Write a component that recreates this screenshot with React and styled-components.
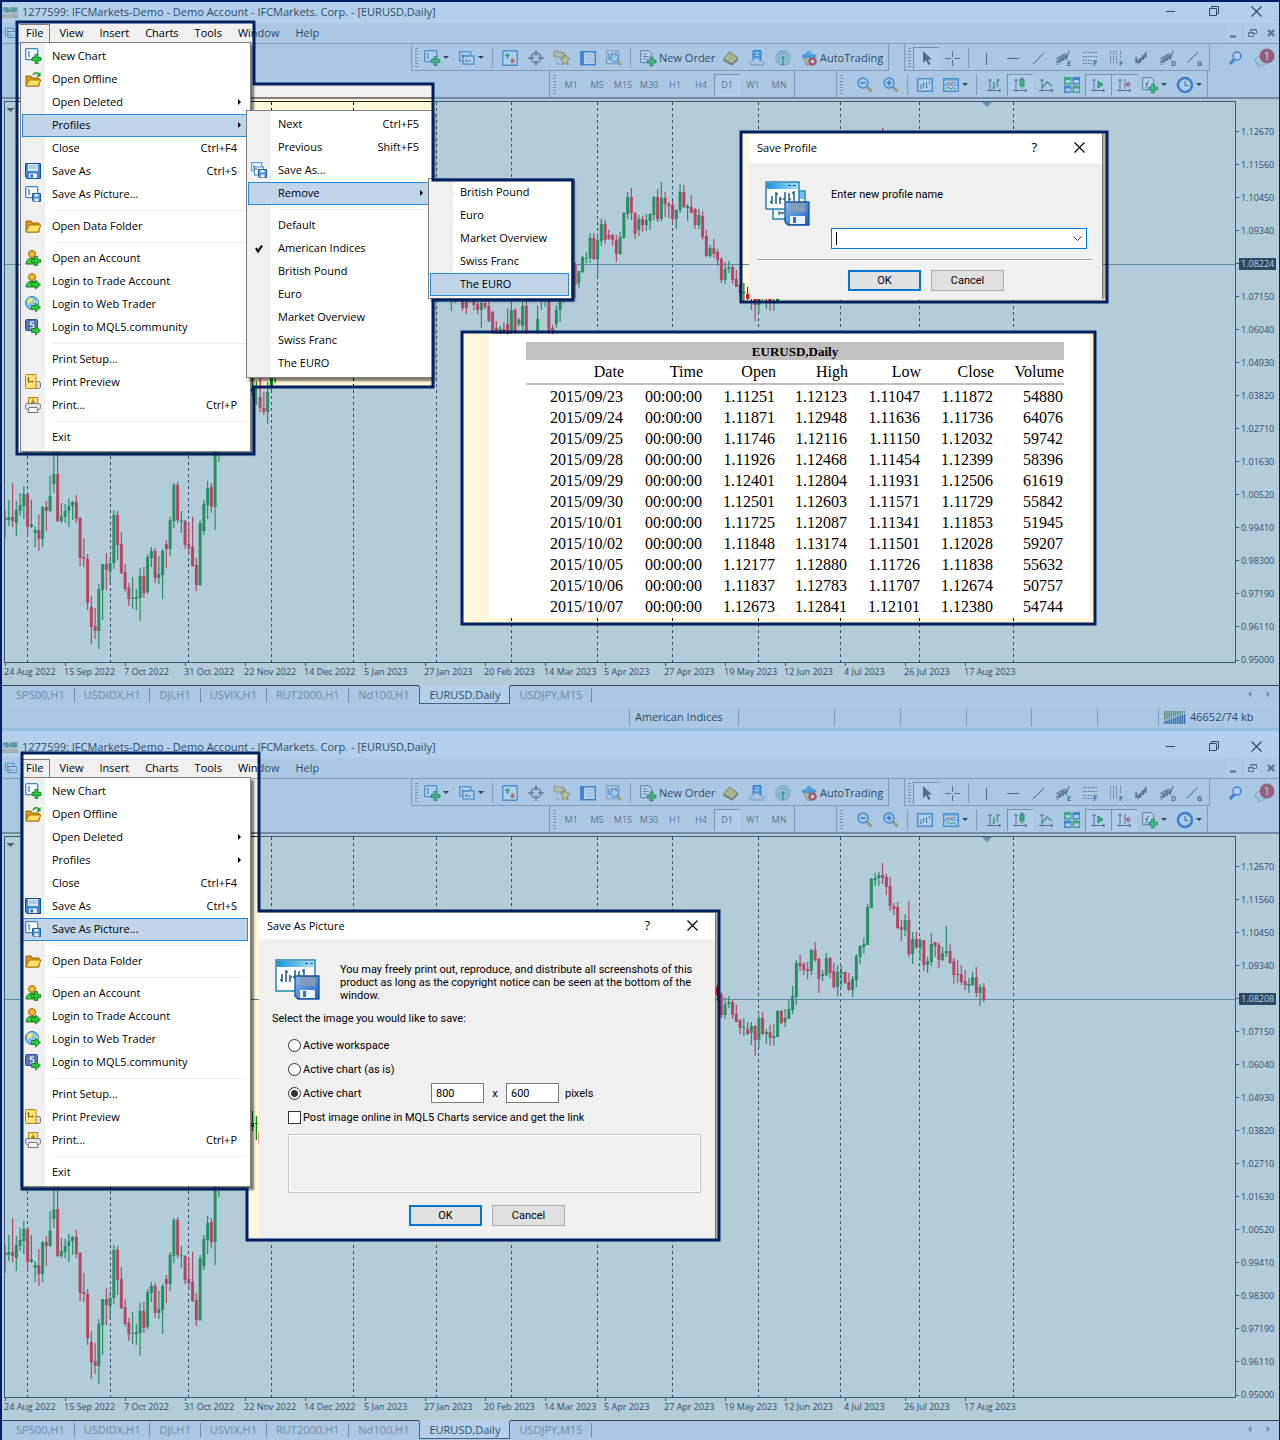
import React from 'react';
import styled, { createGlobalStyle, css } from 'styled-components';

const GlobalStyle = createGlobalStyle`
	* {
		box-sizing: border-box;
	}

	body {
		margin: 0;
		font-family: "Open Sans", "Noto Sans", sans-serif;
		font-size: 11px;
		line-height: 16px;
		color: #000;
	}

	button, input {
		font: inherit;
		color: inherit;
		margin: 0;
		padding: 0;
		border: 0;
		background: none;
		border-radius: 0;
	}

	svg {
		display: block;
		flex-shrink: 0;
	}
`

const NAVY = '#002060';

const Page = styled.div`
	position: relative;
	overflow: hidden;
	background: #f0f0f0;

	&::after {
		content: "";
		position: absolute;
		inset: 0;
		z-index: 7;
		border: solid ${NAVY};
		border-width: 2px 1px 0 2px;
		pointer-events: none;
	}
`

const TitleBar = styled.header`
	display: flex;
	align-items: center;
	gap: 4px;
	height: ${({ $tall }) => ($tall ? '27px' : '23px')};
	padding: ${({ $tall }) => ($tall ? '4px' : '0')} 8px 0 2px;
	background: #fff;

	& > h1 {
		flex: 1;
		margin: 0;
		font-size: 11px;
		font-weight: normal;
		white-space: nowrap;
	}
`

const WindowButtons = styled.div`
	display: flex;
	gap: 11px;
	padding-bottom: 2px;

	& > button {
		display: flex;
		justify-content: center;
		width: 32px;
	}
`

const MenuBar = styled.nav`
	position: relative;
	z-index: 2;
	display: flex;
	align-items: center;
	gap: 3px;
	height: 21px;
	padding-left: 5px;
	border-bottom: 1px solid #a0a0a0;
	background: #f0f0f0;
`

const MenuSlot = styled.div`
	position: relative;
`

const MenuTitle = styled.button`
	height: 19px;
	padding: 0 6px 1px;
	border: solid ${({ $open }) => ($open ? '#808080' : 'transparent')};
	border-width: 1px 1px 0 0;
`

const ChildButtons = styled.div`
	display: flex;
	gap: 3px;
	margin-left: auto;
	padding-right: 1px;

	& > button {
		display: flex;
		align-items: center;
		justify-content: center;
		width: 16px;
		height: 18px;
		background: #f6f6f6;
	}
`

const Popup = styled.ul`
	position: absolute;
	left: ${({ $nested }) => ($nested ? 'calc(100% - 1px)' : '0')};
	top: ${({ $nested }) => ($nested ? '-5px' : '18px')};
	z-index: 3;
	width: ${({ $width }) => $width}px;
	margin: 0;
	padding: 2px 1px;
	list-style: none;
	border: 1px solid #808080;
	background: linear-gradient(to right, #f0f0f0 24px, #fff 24px);
	box-shadow: 3px 3px 2px rgba(0, 0, 0, 0.5);
`

const PopupRow = styled.li`
	position: relative;
	height: 23px;
	margin-right: 1px;
	border: 1px solid ${({ $active }) => ($active ? '#2a8ad4' : 'transparent')};
	background: ${({ $active }) => ($active ? '#c0d5e7' : 'transparent')};

	& > button {
		display: flex;
		align-items: center;
		width: 100%;
		height: 21px;
		text-align: left;
		white-space: nowrap;
	}
`

const PopupIcon = styled.span`
	display: flex;
	justify-content: center;
	width: 20px;
	margin-right: 9px;
`

const Shortcut = styled.span`
	margin-left: auto;
	padding-right: 10px;
`

const Arrow = styled.span`
	margin-left: auto;
	margin-right: 6px;
	border: solid transparent;
	border-width: 3px 0 3px 3px;
	border-left-color: #000;
`

const PopupLine = styled.li`
	height: 9px;
	padding: 4px 2px 0 30px;

	&::before {
		content: "";
		display: block;
		height: 1px;
		background: #f0f0f0;
	}
`

const ToolRow = styled.div`
	display: flex;
	height: ${({ $height }) => $height}px;
	padding-left: ${({ $indent }) => $indent}px;
	background: #f0f0f0;
`

const ToolGroup = styled.div`
	display: flex;
	align-items: center;
	border: solid #a0a0a0;
	border-width: 0 1px ${({ $underline }) => ($underline ? '1px' : '0')} 1px;
	margin-right: ${({ $after }) => $after || 0}px;
	padding: 1px ${({ $end }) => $end || 0}px 0 3px;
`

const Grip = styled.span`
	width: 3px;
	height: 20px;
	margin-right: ${({ $after }) => $after || 1}px;
	background: repeating-linear-gradient(#909090 0 1px, transparent 1px 3px);
`

const ToolButton = styled.button`
	display: flex;
	align-items: center;
	justify-content: ${({ $wide }) => ($wide ? 'flex-start' : 'center')};
	gap: 3px;
	width: ${({ $wide }) => $wide || 26}px;
	height: 22px;
	padding-left: ${({ $wide }) => ($wide ? '5px' : '0')};
	white-space: nowrap;

	${({ $pressed }) => $pressed && css`
		background: #f7f7f7;
		box-shadow: inset 1px 1px #909090, inset -1px -1px #fff;
	`}
`

const Period = styled(ToolButton)`
	font-size: 9px;
	color: #555;
`

const Divider = styled.span`
	width: 1px;
	height: 20px;
	margin: 0 4px 0 3px;
	background: #a0a0a0;
`

const Caret = styled.span`
	border: solid transparent;
	border-width: 3px 3px 0;
	border-top-color: #000;
`

const Corner = styled.div`
	display: flex;
	align-items: center;
	gap: 10px;
	margin-left: auto;
	padding-right: 5px;
`

const ChartFrame = styled.section`
	padding: 2px 0 0 4px;
	border-top: 2px solid #808080;
	border-bottom: 1px solid #000;
	background: #fff8dc;
`

const ChartRow = styled.div`
	display: flex;
`

const Plot = styled.div`
	flex: 1;
	min-width: 0;
	height: 562px;
	border: 1px solid #222;

	& > svg {
		width: 100%;
		height: 100%;
	}
`

const PriceAxis = styled.ol`
	width: 44px;
	height: 562px;
	margin: 0;
	padding: 14px 0 0;
	list-style: none;
	font-size: 9px;
	line-height: 12px;

	& > li {
		display: flex;
		align-items: center;
		height: 33px;
	}

	& > li:last-child {
		height: 34px;
	}

	& > li::before {
		content: "";
		width: 3px;
		height: 1px;
		background: #222;
	}
`

const Price = styled.span`
	padding: 0 2px;
	${({ $current }) => $current && css`
		background: #000;
		color: #fff;
	`}
`

const TimeAxis = styled.ol`
	display: flex;
	height: 22px;
	margin: 0;
	padding: 0;
	list-style: none;
	overflow: hidden;
	font-size: 9px;
	line-height: 12px;

	& > li {
		flex-shrink: 0;
		width: 60px;
		white-space: nowrap;
	}

	& > li::before {
		content: "";
		display: block;
		width: 1px;
		height: 3px;
		margin-left: 1px;
		background: #222;
	}
`

const Tabs = styled.div`
	display: flex;
	align-items: flex-start;
	height: 19px;
	padding: 0 7px;
	background: #f0f0f0;
`

const Tab = styled.button`
	display: flex;
	align-items: center;
	height: 17px;
	color: ${({ $active }) => ($active ? '#000' : '#808080')};

	& > span {
		padding: 0 9px;
		line-height: 14px;
		border-right: 1px solid ${({ $plain }) => ($plain ? 'transparent' : '#808080')};
	}

	${({ $active }) => $active && css`
		background: #fff;
		border: solid #333;
		border-width: 0 1px 1px;
		height: 18px;
		box-shadow: 0 -1px #fff;

		& > span {
			border: 0;
		}
	`}
`

const TabScroll = styled.div`
	display: flex;
	gap: 8px;
	margin: 3px 0 0 auto;
`

const StatusBar = styled.footer`
	display: flex;
	align-items: center;
	height: 26px;
	border-top: 1px solid #fafafa;
	border-bottom: 3px solid #c8dfe8;
	background: #f0f0f0;
`

const StatusCell = styled.div`
	display: flex;
	align-items: center;
	gap: 4px;
	flex: ${({ $width }) => ($width ? `0 0 ${$width}px` : '1')};
	height: 18px;
	padding-left: 5px;
	border-left: 1px solid ${({ $width }) => ($width ? '#a0a0a0' : 'transparent')};
	white-space: nowrap;
`

const Tint = styled.div`
	position: absolute;
	inset: 0;
	z-index: 5;
	background: rgba(91, 155, 213, 0.47);
	pointer-events: none;
`

const Outlines = styled.svg`
	position: absolute;
	inset: 0;
	z-index: 6;
	width: 100%;
	height: 100%;
	pointer-events: none;
	fill: none;
	stroke: ${NAVY};
	stroke-width: 3;
`

const Floating = styled.div`
	position: absolute;
	z-index: 4;
	left: ${({ $x }) => $x}px;
	top: ${({ $y }) => $y}px;
	width: ${({ $width }) => $width}px;
`

const Dialog = styled(Floating).attrs({ as: 'form' })`
	background: #f0f0f0;
	border-right: 1px solid #777;
	box-shadow: 3px 0 2px rgba(0, 0, 0, 0.3);
	font-family: Roboto, "Open Sans", sans-serif;
	font-size: 11px;
	line-height: 13px;
`

const DialogTitle = styled.div`
	display: flex;
	align-items: center;
	height: ${({ $height }) => $height}px;
	padding: 0 15px 2px 8px;
	background: #fff;
	font-family: "Open Sans", "Noto Sans", sans-serif;

	& > h2 {
		flex: 1;
		margin: 0;
		font-size: 11px;
		font-weight: normal;
	}

	& > button {
		margin-left: 34px;
		font-size: 13px;
	}
`

const ProfileBody = styled.div`
	padding: 18px 15px 8px 8px;
`

const ProfileFields = styled.div`
	display: grid;
	grid-template-columns: 66px 1fr;
	padding: 0 0 10px 8px;

	& > label {
		padding-top: 7px;
	}
`

const Combo = styled.div`
	grid-column: 2;
	display: flex;
	align-items: center;
	height: 21px;
	margin-top: 1px;
	padding: 0 4px;
	border: 1px solid #0078d7;
	background: #fff;

	&::before {
		content: "";
		width: 1px;
		height: 13px;
		background: #000;
	}

	& > input {
		flex: 1;
		min-width: 0;
		height: 17px;
		outline: 0;
	}
`

const Rule = styled.hr`
	height: 2px;
	margin: 0 -5px 9px 0;
	border: solid #fff;
	border-width: 0 0 1px;
	background: #a0a0a0;
`

const Buttons = styled.div`
	display: flex;
	gap: 10px;
	padding-left: ${({ $indent }) => $indent}px;
`

const PushButton = styled.button`
	width: 73px;
	height: 21px;
	border: ${({ $primary }) => ($primary ? '2px solid #0078d7' : '1px solid #adadad')};
	background: #e1e1e1;
`

const PictureBody = styled.div`
	padding: 20px 14px 13px 13px;
`

const Notice = styled.div`
	display: flex;
	gap: 19px;
	height: 53px;
	padding-left: 3px;

	& > p {
		margin: 4px 0 0;
	}
`

const Options = styled.fieldset`
	margin: 0;
	padding: 0;
	border: 0;

	& > legend {
		padding: 0;
		margin-bottom: 8px;
	}
`

const OptionRow = styled.div`
	display: flex;
	align-items: center;
	height: 24px;
	padding-left: 16px;

	& > label {
		width: ${({ $fixed }) => ($fixed ? '130px' : 'auto')};
		padding-left: 2px;
	}
`

const Mark = styled.input`
	appearance: none;
	width: 13px;
	height: 13px;
	border: 1px solid #333;
	border-radius: ${({ type }) => (type === 'radio' ? '50%' : '0')};
	background: #fff;

	&:checked {
		background: radial-gradient(#333 0 3px, #fff 4px);
	}
`

const SizeInput = styled.input`
	width: 53px;
	height: 20px;
	padding: 0 4px;
	border: 1px solid #7a7a7a;
	background: #fff;
`

const Unit = styled.span`
	padding: 0 6px;
	min-width: 22px;
	text-align: center;
`

const LinkBox = styled.output`
	display: block;
	height: 59px;
	margin: 5px 0 12px 16px;
	border: 1px solid #c8c8c8;
	box-shadow: inset 0 0 0 1px #fff;
`

const Sheet = styled(Floating)`
	padding: 8px 26px 1px 37px;
	background: #fff;
	font-family: "Liberation Serif", "Times New Roman", serif;
	font-size: 16px;
	line-height: 21px;
`

const Quotes = styled.table`
	width: 100%;
	table-layout: fixed;
	border-collapse: collapse;
	text-align: right;

	& > caption {
		height: 18px;
		background: #c0c0c0;
		font-size: 13px;
		line-height: 19px;
		font-weight: bold;
	}

	& th {
		height: 24px;
		padding: 0;
		font-weight: normal;
		border-bottom: 2px solid #c0c0c0;
	}

	& td {
		height: 21px;
		padding: 0 1px 0 0;
	}

	& tbody tr:first-child td {
		height: 22px;
		padding-top: 1px;
	}
`

const plus = (x, y) => (
	<path d={`M${x} ${y}h3v3h3v3h-3v3h-3v-3h-3v-3h3z`} fill="#2fc23c" stroke="#0b7f16" strokeWidth=".8" />
);
const goArrow = <path d="M6.500 9.500h4V7l5 4.500-5 4.500v-2.500h-4z" fill="#2fc23c" stroke="#0b7f16" strokeWidth=".8" />;
const miniDisk = (
	<g>
		<path d="M7.500 7.500h8v8h-7l-1-1z" fill="#4b8fd8" stroke="#1f5d9e" />
		<path d="M9.500 8h4v2.500h-4zM9.500 12.500h4v3h-4z" fill="#e8f1fa" />
	</g>
);
const sheet = (
	<g>
		<rect x=".7" y=".7" width="12" height="11" rx="1" fill="#f7fbff" stroke="#3d87c8" strokeWidth="1.300" />
		<path d="M4 3v6M3 4.500h1M4 8h1M8 9h2" fill="none" stroke="#446a8c" />
	</g>
);
const person = (
	<g>
		<path d="M1 14c0-8 12-8 12 0z" fill="#43c93f" stroke="#138018" />
		<circle cx="7" cy="4" r="3.500" fill="#f0b53a" stroke="#a8690c" />
	</g>
);
const lens = (
	<g>
		<path d="M9.500 9.500l5 5" stroke="#c9a13a" strokeWidth="3" />
		<circle cx="6" cy="6" r="5" fill="#dff1fb" stroke="#3580c4" strokeWidth="1.500" />
	</g>
);
const axes = <path d="M4 2v12.500M1 13.500h13M2.500 4L4 2l1.500 2M13 12l2 1.500-2 1.500" fill="none" stroke="#555" />;
const zigzag = <path d="M1 15l3-7v5l3-8v6l3-7v6l3-9M0 12l12-6M0 9l9-5" fill="none" stroke="#555" strokeWidth="1.100" />;
const letter = (c) => <text x="11" y="16" fontSize="7" fontWeight="bold" fill="#444">{c}</text>;

const drawings = {
	newChart: <>{sheet}{plus(10, 6.500)}</>,
	openOffline: (
		<>
			<path d="M1 15V5h5l1 2h7v8z" fill="#d99a1c" stroke="#9c6a08" />
			<path d="M1 15l3-6h12l-3 6z" fill="#ffe06a" stroke="#a9780d" />
			<path d="M8 4q3-4 6-1" fill="none" stroke="#1b9b28" strokeWidth="1.500" />
			<path d="M15.500 1v4.500H11z" fill="#1b9b28" />
		</>
	),
	folder: (
		<>
			<path d="M1 14V3h5l1 2h7v9z" fill="#d99a1c" stroke="#9c6a08" />
			<path d="M1 14l3-7h12l-3 7z" fill="#ffe06a" stroke="#a9780d" />
		</>
	),
	disk: (
		<>
			<path d="M.5.5h15v15H2L.5 14z" fill="#3d87d0" stroke="#1d4f8e" />
			<path d="M3 1h10v7H3z" fill="#d7e6f5" />
			<path d="M4 3h8M4 5h8" stroke="#8fb3d6" />
			<path d="M4 10.500h8V15H4z" fill="#e8f1fa" />
			<path d="M5.500 11.500H8v3H5.500z" fill="#2b66a8" />
		</>
	),
	picture: <>{sheet}{miniDisk}</>,
	profiles: (
		<>
			<rect x=".7" y=".7" width="10" height="8" fill="#f7fbff" stroke="#3d87c8" />
			<rect x="3.500" y="5" width="9" height="8" fill="#f7fbff" stroke="#3d87c8" />
			<path d="M3 3v4h4" fill="none" stroke="#446a8c" />
			{miniDisk}
		</>
	),
	openAccount: <>{person}{plus(9.500, 6.500)}</>,
	login: <>{person}{goArrow}</>,
	web: (
		<>
			<circle cx="7" cy="7" r="6.500" fill="#7fc4ee" stroke="#2c78b4" />
			<path d="M3 3q4-3 5 1l-3 4-3-1zM9 6l4-1-1 5z" fill="#f2e37c" />
			{goArrow}
		</>
	),
	mql: (
		<>
			<rect x=".5" y=".5" width="12" height="11" rx="1" fill="#5677b5" stroke="#33508c" />
			<path d="M9 3H5.500v2.500Q9 5 9 7.200T5 9" fill="none" stroke="#fff" strokeWidth="1.200" />
			{goArrow}
		</>
	),
	preview: (
		<>
			<rect x="7" y="7.500" width="8.500" height="7" rx="2" fill="#ddd" stroke="#777" />
			<rect x=".5" y=".5" width="10.500" height="14" rx="1" fill="#ffe275" stroke="#b5871b" />
			<path d="M3.500 3v6M2.500 5h2M3.500 7.500h5M7.500 6.500v2" fill="none" stroke="#8a6a1a" />
		</>
	),
	print: (
		<>
			<rect x="3.500" y=".5" width="9" height="8" fill="#ffe275" stroke="#b5871b" />
			<path d="M8 2v4M6 5h4" stroke="#8a6a1a" />
			<rect x=".5" y="6.500" width="15" height="6" rx="2" fill="#e4e4e4" stroke="#777" />
			<path d="M4 10.500h8l1 5H3z" fill="#fafafa" stroke="#777" />
		</>
	),
	check: <path d="M5 8l2 3.500L11 5.500" fill="none" stroke="#000" strokeWidth="2" />,
	windows: (
		<>
			<rect x=".7" y="1.700" width="11" height="9" fill="#f7fbff" stroke="#3d87c8" strokeWidth="1.300" />
			<rect x="4" y="6" width="11" height="8" fill="#f7fbff" stroke="#3d87c8" strokeWidth="1.300" />
			<path d="M3.500 4v4M3 6h7M7 9v3M6 11h6" fill="none" stroke="#446a8c" />
		</>
	),
	market: (
		<>
			<rect x=".7" y=".7" width="14.600" height="14.600" rx="1" fill="#f7fbff" stroke="#3d87c8" strokeWidth="1.400" />
			<path d="M5.500 3l3 3h-2v2.500h-2V6h-2z" fill="#1fa52c" />
			<path d="M10.500 13.500l3-3h-2V8h-2v2.500h-2z" fill="#e04434" />
		</>
	),
	target: (
		<>
			<circle cx="8" cy="8" r="5" fill="none" stroke="#666" strokeWidth="1.300" />
			<path d="M8 0v6M8 10v6M0 8h6M10 8h6" stroke="#666" strokeWidth="1.300" />
		</>
	),
	favourites: (
		<>
			<path d="M0 7V1h4l1 1.500h5V7z" fill="#f3dc8c" stroke="#b18d2c" />
			<path d="M11 4.500l1.600 3.300 3.400.6-2.500 2.600.6 3.700L11 13l-3.100 1.700.6-3.700L6 8.400l3.400-.6z" fill="#ffe15a" stroke="#a8842a" />
			<path d="M3 9v6M3 14h3" stroke="#888" strokeDasharray="1 1" />
		</>
	),
	terminal: (
		<>
			<rect x=".7" y="1.700" width="14.600" height="13" fill="#fff" stroke="#2b72c0" strokeWidth="1.400" />
			<path d="M1 2h3v12H1z" fill="#2b72c0" />
			<path d="M6 5h8M6 8h8M6 11h8" stroke="#c3cfdb" />
		</>
	),
	tester: (
		<>
			<rect x=".7" y=".7" width="12" height="13" fill="#f4f6f8" stroke="#7d97b0" />
			<path d="M3 3v7M6 2v6M10 2v4" stroke="#667" />
			<path d="M11 11l4 4" stroke="#c9a13a" strokeWidth="2.500" />
			<circle cx="8.500" cy="8" r="4" fill="#cfe6f7" fillOpacity=".8" stroke="#3580c4" />
		</>
	),
	order: (
		<>
			<path d="M.7.7h8l3 3v9H.7z" fill="#fff" stroke="#666" />
			<path d="M3 4h4M3 6.500h6M3 9h4" stroke="#777" />
			{plus(10, 7)}
		</>
	),
	book: (
		<>
			<path d="M.5 9l6-7 8.500 6-6 6z" fill="#f3c95a" stroke="#8a6414" />
			<path d="M.5 9L9 14l6-6v2l-6 5.500L.5 11z" fill="#8f6a24" />
		</>
	),
	host: (
		<>
			<path d="M4 .5h8v9H4z" fill="#3a9be6" stroke="#1d6eb6" />
			<path d="M6 3h4M6 5.500h4" stroke="#fff" />
			<path d="M3 15c-4-.5-2-5 .5-4 1-4 7-4 7.500 0 5-.5 5 4 2 4z" fill="#e7edf5" stroke="#8093aa" />
		</>
	),
	signal: (
		<>
			<circle cx="8" cy="8" r="7" fill="none" stroke="#8fa9bd" strokeWidth="1.300" />
			<circle cx="8" cy="8" r="4.300" fill="none" stroke="#58a9a0" strokeWidth="1.300" />
			<circle cx="8" cy="8" r="2" fill="#1fa052" />
			<path d="M8 8v7" stroke="#1fa052" strokeWidth="1.500" />
		</>
	),
	robot: (
		<>
			<path d="M2 7h12l-3 8H6z" fill="#f1d35b" stroke="#aa8420" />
			<ellipse cx="8" cy="6" rx="7.500" ry="2.500" fill="#3a9ad4" />
			<path d="M4 5q4-9 8 0z" fill="#59b1e6" />
			<circle cx="11.500" cy="11.500" r="4.300" fill="#df2b22" />
			<path d="M10 10h3v3h-3z" fill="#fff" />
		</>
	),
	cursor: <path d="M5 1v12l3-3 2.500 5 2-1L10 9.500h4z" fill="#444" />,
	cross: <path d="M8.500 1v6M8.500 10v6M1 8.500h6M10 8.500h6" stroke="#555" />,
	vline: <path d="M8.500 3v12" stroke="#444" />,
	hline: <path d="M3 8.500h12" stroke="#444" />,
	trend: <path d="M3 14L14 3" stroke="#444" />,
	equidistant: <>{zigzag}{letter('E')}</>,
	fibo: <><path d="M1 2.500h14M1 6.500h14M1 10.500h14M1 13.500h9" stroke="#666" strokeDasharray="1.500 1" />{letter('F')}</>,
	fiboTime: <><path d="M2.500 1v13M5.500 1v13M8.500 1v13M12.500 1v8" stroke="#666" strokeDasharray="1.500 1" />{letter('F')}</>,
	wave: <path d="M2 13V7l2 6 2-5v5l3-8v5l3-8v6" fill="none" stroke="#555" strokeWidth="1.300" />,
	deviation: <>{zigzag}{letter('D')}</>,
	gann: <><path d="M1 13L12 2" stroke="#444" />{letter('G')}</>,
	search: (
		<>
			<path d="M7.500 9L3 14" stroke="#2f6fd0" strokeWidth="3" />
			<circle cx="10" cy="6" r="4" fill="#fff" stroke="#2f6fd0" strokeWidth="1.500" />
		</>
	),
	zoomOut: <>{lens}<path d="M3.500 6h5" stroke="#1d5f9f" strokeWidth="1.500" /></>,
	zoomIn: <>{lens}<path d="M3.500 6h5M6 3.500v5" stroke="#1d5f9f" strokeWidth="1.500" /></>,
	fit: (
		<>
			<rect x=".7" y="1.700" width="14.600" height="12.600" fill="#f7fbff" stroke="#3d87c8" strokeWidth="1.400" />
			<path d="M4 7v5M3 11h1M6.500 6v5M7 7h1M9.500 5v6M10 10h1M12.500 4v3" stroke="#446a8c" />
		</>
	),
	template: (
		<>
			<rect x=".7" y="1.700" width="14.600" height="12.600" fill="#f7fbff" stroke="#3d87c8" strokeWidth="1.400" />
			<path d="M1 3h14M1 8h14" stroke="#3d87c8" />
			<path d="M3 7l3-1.500 2 1L13 5" fill="none" stroke="#d04040" />
			<path d="M3 12l2-2 3 2 2-1.500 3 2" fill="none" stroke="#1b9b28" />
		</>
	),
	bars: <>{axes}<path d="M8 5v7M11.500 2v8M8 11H6.500M11.500 3h2" stroke="#1b9b28" strokeWidth="1.400" /></>,
	candles: <>{axes}<path d="M10 0v12" stroke="#0b7f16" /><path d="M8 2h4v7H8z" fill="#2fc23c" stroke="#0b7f16" /></>,
	line: <>{axes}<path d="M4 11l5-6 5 4" fill="none" stroke="#1b9b28" strokeWidth="1.300" /></>,
	tile: (
		<>
			<path d="M0 0h7.500v7.500H0zM8.500 8.500H16V16H8.500z" fill="#36a63c" />
			<path d="M8.500 0H16v7.500H8.500zM0 8.500h7.500V16H0z" fill="#2f77c4" />
			<path d="M1.500 3h5v3h-5zM10 3h5v3h-5zM1.500 11.500h5v3h-5zM10 11.500h5v3h-5z" fill="#eef4fa" />
		</>
	),
	scroll: <>{axes}<path d="M8 4l5 3.500L8 11z" fill="#2fc23c" stroke="#0b7f16" /></>,
	shift: <>{axes}<path d="M9 2v10" stroke="#555" /><path d="M15 7.500h-4M13 5l-2.500 2.500L13 10" fill="none" stroke="#d0402c" strokeWidth="1.300" /></>,
	indicator: (
		<>
			<path d="M.7.7h9l2 2v10H.7z" fill="#fff" stroke="#666" />
			<path d="M3 11c2 1 2-8 4-7M3 7h3" fill="none" stroke="#444" />
			{plus(9.500, 7)}
		</>
	),
	clock: (
		<>
			<circle cx="8" cy="8" r="7" fill="#f6faff" stroke="#1f64b8" strokeWidth="2.500" />
			<path d="M8 4v4.500h3.500" fill="none" stroke="#444" />
		</>
	),
	minimize: <path d="M4 8.500h9" stroke="#000" />,
	restore: <path d="M4.500 5.500h7v7h-7zM6.500 5.500v-2h7v7h-2" fill="none" stroke="#000" />,
	close: <path d="M3.500 3.500l10 10M13.500 3.500l-10 10" stroke="#000" strokeWidth="1.100" />,
	childMin: <path d="M5 11.500h6" stroke="#555" strokeWidth="2" />,
	childRestore: <path d="M4.500 7.500h5v4h-5zM6.500 7V4.500h6v4h-3M4 8h6M6 5h6" fill="none" stroke="#555" />,
	childClose: <path d="M5 5l6 6M11 5l-6 6" stroke="#555" strokeWidth="2" />,
	app: (
		<>
			<path d="M0 3h16v6H0z" fill="#b9d5c2" />
			<path d="M1 4l4-1 3 3 2-3 5 1v3l-4 2-3-2-3 2-3-3z" fill="#639a72" />
			<path d="M0 10h16v4H0z" fill="#d7b978" />
			<path d="M3 12h10" stroke="#f3ead2" />
		</>
	),
	left: <path d="M10 3v10L5 8z" fill="#808080" />,
	right: <path d="M6 3v10l5-5z" fill="#808080" />,
};

const IconBox = styled.svg`
	overflow: visible;
`

const Icon = ({ name, size = 16 }) => (
	<IconBox width={size} height={size} viewBox="0 0 16 16" aria-hidden="true">{drawings[name]}</IconBox>
);

const PaneIcon = ({ stacked }) => (
	<svg width="46" height="46" viewBox="0 0 46 46" aria-hidden="true">
		<defs>
			<linearGradient id="pane" x1="0" x2="1"><stop stopColor="#1c94dc" /><stop offset="1" stopColor="#a6e0fb" /></linearGradient>
			<linearGradient id="disk" x2="1" y2="1"><stop stopColor="#8cbcf0" /><stop offset="1" stopColor="#1c5fc4" /></linearGradient>
		</defs>
		{stacked && <path d="M8 10h32v28H8z" fill="#eef6fb" stroke="#2384b4" strokeWidth="1.500" />}
		{stacked && <path d="M30 11h9v7h-9z" fill="#6cc4f2" />}
		{stacked && <path d="M14 30v4M15 32h4" stroke="#1f6078" strokeWidth="1.300" />}
		<path d={stacked ? 'M1 1h33v27H1z' : 'M1 1h39v31H1z'} fill="#fbfdff" stroke="#2384b4" strokeWidth="1.500" />
		<path d={stacked ? 'M2 2h31v6H2z' : 'M2 2h37v6H2z'} fill="url(#pane)" />
		<path d={stacked ? 'M23 4.500h3M28 4.500h3' : 'M30 4.500h3M35 4.500h3'} stroke="#1b5e86" />
		<path d="M7 15v8M5 21h2M11 11v12M11 13h2M15 16v7M15 18h2M20 11v9M18 18h2M24 12v8M24 18h2M29 10v10M27 12h2" stroke="#1f6078" strokeWidth="1.500" />
		<g transform={stacked ? 'translate(-1 4)' : 'translate(-1 0)'}>
			<path d="M21 17h24v23H24l-3-3z" fill="url(#disk)" stroke="#1c5298" strokeWidth="1.300" />
			<path d="M26 18h15v9H26z" fill="#7f9db8" />
			<path d="M26 31h15v8H26z" fill="#eaf3fc" />
			<path d="M29 32h3v6h-3z" fill="#2d6fc8" />
		</g>
	</svg>
);

// Runs of candles: first slot, then [direction, high, body top, body bottom, low]
const runs = [
	[0, [
		['d', 510, 518, 520, 538], ['u', 500, 517, 520, 526], ['d', 483, 517, 521, 527], ['u', 501, 510, 523, 536],
		['u', 493, 505, 511, 516], ['u', 486, 494, 506, 519], ['d', 493, 494, 527, 537], ['u', 500, 524, 527, 528],
		['u', 526, 530, 533, 547], ['d', 514, 530, 539, 551], ['u', 506, 507, 539, 547], ['d', 501, 507, 511, 531],
		['u', 476, 496, 511, 512], ['u', 440, 474, 484, 493], ['d', 445, 474, 521, 522], ['u', 503, 516, 521, 523],
		['u', 504, 511, 517, 523], ['u', 499, 506, 511, 527], ['u', 501, 502, 506, 520], ['d', 495, 502, 519, 523],
		['d', 517, 518, 558, 566], ['d', 538, 557, 559, 567], ['d', 554, 559, 603, 610], ['d', 596, 607, 627, 644],
		['d', 608, 626, 631, 639], ['u', 584, 589, 631, 649], ['u', 564, 564, 590, 620], ['d', 553, 564, 570, 590],
		['u', 556, 563, 571, 585], ['u', 510, 515, 563, 569], ['d', 511, 515, 545, 560], ['d', 532, 544, 573, 574],
		['d', 564, 572, 589, 592], ['d', 583, 588, 599, 606], ['u', 577, 598, 599, 609], ['u', 589, 597, 599, 610],
		['u', 568, 576, 598, 621], ['d', 567, 576, 593, 598], ['u', 554, 557, 592, 594], ['u', 547, 551, 558, 567],
		['d', 548, 551, 578, 583], ['u', 556, 574, 578, 584], ['u', 549, 551, 575, 599], ['d', 540, 544, 549, 568],
		['u', 517, 520, 549, 556], ['u', 483, 485, 521, 528], ['d', 482, 485, 520, 523], ['u', 511, 520, 521, 533],
		['d', 520, 521, 545, 549], ['d', 523, 544, 548, 555], ['d', 517, 547, 566, 567], ['d', 558, 565, 585, 591],
		['u', 520, 523, 585, 586], ['u', 500, 504, 531, 535], ['u', 481, 488, 505, 519], ['d', 483, 487, 507, 513],
		['u', 430, 430, 507, 530], ['u', 400, 400, 448, 462],
	]],
	[66, [
		['u', 376, 388, 392, 396], ['u', 381, 388, 389, 405], ['d', 370, 397, 408, 412], ['d', 392, 408, 412, 415],
		['u', 382, 392, 412, 424], ['u', 370, 370, 386, 390], ['u', 370, 370, 372, 383],
	]],
	[119, [
		['u', 290, 290, 300, 311], ['u', 290, 290, 299, 303], ['u', 290, 290, 295, 298], ['d', 290, 290, 308, 311],
		['d', 295, 300, 308, 314], ['u', 295, 298, 301, 303], ['d', 297, 300, 305, 310], ['d', 301, 304, 310, 314],
		['u', 301, 303, 310, 328], ['d', 300, 303, 307, 309], ['d', 301, 306, 321, 322], ['d', 311, 312, 331, 335],
		['d', 321, 328, 332, 340], ['u', 326, 329, 334, 340], ['d', 322, 329, 332, 336], ['d', 308, 324, 335, 340],
		['u', 301, 310, 332, 340], ['d', 308, 310, 332, 335], ['u', 318, 320, 324, 327], ['u', 302, 306, 326, 330],
		['d', 300, 306, 331, 334], ['u', 280, 285, 295, 298], ['u', 280, 285, 295, 298], ['u', 305, 319, 332, 336],
		['u', 295, 296, 300, 310], ['u', 290, 292, 299, 307], ['d', 298, 300, 331, 334], ['d', 325, 328, 333, 336],
		['u', 305, 310, 324, 328], ['u', 300, 300, 310, 322], ['u', 280, 285, 299, 303],
	]],
	[151, [
		['d', 232, 253, 262, 270], ['d', 262, 265, 285, 298], ['u', 271, 271, 283, 288], ['u', 256, 257, 272, 273],
		['u', 252, 258, 259, 263], ['u', 233, 238, 258, 263], ['d', 233, 238, 259, 260], ['u', 236, 240, 259, 277],
		['u', 219, 224, 241, 246], ['d', 220, 224, 240, 244], ['d', 230, 235, 239, 240], ['d', 234, 235, 240, 246],
		['d', 235, 240, 254, 262], ['u', 232, 237, 254, 255], ['u', 212, 213, 238, 239], ['u', 192, 197, 214, 219],
		['d', 188, 197, 213, 220], ['d', 212, 213, 234, 239], ['u', 215, 219, 230, 236], ['d', 216, 219, 225, 232],
		['u', 214, 220, 225, 231], ['u', 213, 214, 221, 230], ['u', 196, 197, 215, 220], ['d', 189, 197, 219, 222],
		['u', 182, 198, 219, 221], ['d', 192, 198, 204, 217], ['d', 202, 204, 206, 218], ['d', 201, 205, 219, 223],
		['u', 209, 210, 219, 229], ['u', 184, 192, 210, 213], ['d', 185, 192, 207, 208], ['u', 204, 206, 208, 221],
		['d', 195, 207, 213, 213], ['d', 208, 209, 225, 229], ['u', 209, 215, 225, 229], ['d', 211, 216, 237, 240],
		['d', 230, 236, 256, 257], ['u', 245, 248, 256, 258], ['d', 239, 248, 254, 258], ['d', 249, 252, 260, 266],
		['d', 257, 259, 280, 283], ['u', 262, 269, 280, 284], ['u', 261, 267, 269, 273], ['d', 265, 267, 280, 284],
		['d', 270, 279, 287, 287], ['d', 284, 285, 293, 299], ['u', 283, 292, 293, 301], ['d', 287, 294, 299, 300],
		['u', 287, 291, 298, 310], ['d', 290, 291, 305, 321], ['u', 280, 283, 305, 313], ['d', 277, 283, 299, 300],
		['u', 294, 297, 299, 309], ['d', 290, 297, 303, 311], ['u', 289, 301, 303, 311], ['u', 275, 276, 302, 302],
		['d', 275, 276, 288, 289], ['u', 274, 283, 287, 292], ['u', 264, 274, 284, 284], ['u', 251, 261, 275, 279],
		['u', 225, 228, 262, 270], ['d', 220, 228, 231, 236], ['d', 227, 229, 235, 240], ['d', 227, 234, 236, 244],
		['u', 214, 215, 236, 240], ['d', 207, 215, 225, 227], ['d', 223, 224, 244, 258], ['u', 235, 239, 241, 246],
		['u', 218, 223, 240, 241], ['d', 222, 223, 238, 243], ['d', 228, 236, 252, 254], ['u', 231, 237, 252, 261],
		['u', 231, 237, 239, 252], ['d', 236, 237, 248, 249], ['d', 238, 247, 255, 256], ['u', 241, 244, 255, 262],
		['u', 219, 221, 245, 252], ['u', 210, 211, 222, 229], ['u', 203, 209, 212, 219], ['u', 169, 172, 210, 210],
		['u', 143, 144, 173, 173], ['u', 138, 143, 145, 151], ['u', 137, 140, 143, 151], ['d', 128, 140, 143, 149],
		['d', 139, 142, 152, 160], ['d', 142, 151, 171, 176], ['d', 168, 171, 174, 180], ['d', 167, 172, 193, 194],
		['d', 185, 192, 195, 206], ['u', 179, 185, 195, 201], ['d', 166, 185, 219, 222], ['u', 197, 204, 219, 229],
		['d', 197, 204, 212, 214], ['u', 203, 205, 213, 226], ['d', 205, 205, 230, 236], ['u', 222, 226, 230, 238],
		['u', 198, 209, 227, 231], ['d', 207, 207, 211, 222], ['d', 208, 210, 225, 233], ['u', 212, 218, 225, 226],
		['u', 191, 216, 218, 222], ['d', 209, 216, 228, 229], ['d', 223, 226, 240, 249], ['d', 225, 239, 240, 248],
		['d', 230, 239, 247, 250], ['d', 235, 246, 250, 255], ['u', 243, 249, 251, 258], ['u', 237, 242, 250, 251],
		['d', 232, 242, 258, 262], ['u', 249, 252, 258, 271], ['d', 248, 252, 265, 267],
	]],
];

const candles = runs.flatMap(([first, rows]) =>
	rows.map(([dir, high, top, bottom, low], i) => ({ x: 5 + (first + i) * 3.75, dir, high, top, bottom, low }))
);

const months = [27, 110, 188, 271, 353, 436, 511, 597, 672, 758, 840, 919, 1013];

const prices = [
	'1.12670', '1.11560', '1.10450', '1.09340', null, '1.07150', '1.06040', '1.04930', '1.03820',
	'1.02710', '1.01630', '1.00520', '0.99410', '0.98300', '0.97190', '0.96110', '0.95000',
];

const dates = [
	'24 Aug 2022', '15 Sep 2022', '7 Oct 2022', '31 Oct 2022', '22 Nov 2022', '14 Dec 2022', '5 Jan 2023',
	'27 Jan 2023', '20 Feb 2023', '14 Mar 2023', '5 Apr 2023', '27 Apr 2023', '19 May 2023', '12 Jun 2023',
	'4 Jul 2023', '26 Jul 2023', '17 Aug 2023',
];

const tabs = ['SP500,H1', 'USDIDX,H1', 'DJI,H1', 'USVIX,H1', 'RUT2000,H1', 'Nd100,H1', 'EURUSD,Daily', 'USDJPY,M15'];

const removeMenu = [
	{ label: 'British Pound' },
	{ label: 'Euro' },
	{ label: 'Market Overview' },
	{ label: 'Swiss Franc' },
	{ label: 'The EURO', active: true },
];

const profilesMenu = [
	{ label: 'Next', keys: 'Ctrl+F5' },
	{ label: 'Previous', keys: 'Shift+F5' },
	{ label: 'Save As...', icon: 'profiles' },
	{ label: 'Remove', active: true, items: removeMenu, width: 144 },
	null,
	{ label: 'Default' },
	{ label: 'American Indices', icon: 'check' },
	{ label: 'British Pound' },
	{ label: 'Euro' },
	{ label: 'Market Overview' },
	{ label: 'Swiss Franc' },
	{ label: 'The EURO' },
];

const fileMenu = [
	{ label: 'New Chart', icon: 'newChart' },
	{ label: 'Open Offline', icon: 'openOffline' },
	{ label: 'Open Deleted', arrow: true },
	{ label: 'Profiles', arrow: true, items: profilesMenu, width: 187 },
	{ label: 'Close', keys: 'Ctrl+F4' },
	{ label: 'Save As', keys: 'Ctrl+S', icon: 'disk' },
	{ label: 'Save As Picture...', icon: 'picture' },
	null,
	{ label: 'Open Data Folder', icon: 'folder' },
	null,
	{ label: 'Open an Account', icon: 'openAccount' },
	{ label: 'Login to Trade Account', icon: 'login' },
	{ label: 'Login to Web Trader', icon: 'web' },
	{ label: 'Login to MQL5.community', icon: 'mql' },
	null,
	{ label: 'Print Setup...' },
	{ label: 'Print Preview', icon: 'preview' },
	{ label: 'Print...', keys: 'Ctrl+P', icon: 'print' },
	null,
	{ label: 'Exit' },
];

const columns = [['Date', 98], ['Time', 79], ['Open', 73], ['High', 72], ['Low', 73], ['Close', 73], ['Volume', 70]];

const quotes = [
	['2015/09/23', '00:00:00', '1.11251', '1.12123', '1.11047', '1.11872', '54880'],
	['2015/09/24', '00:00:00', '1.11871', '1.12948', '1.11636', '1.11736', '64076'],
	['2015/09/25', '00:00:00', '1.11746', '1.12116', '1.11150', '1.12032', '59742'],
	['2015/09/28', '00:00:00', '1.11926', '1.12468', '1.11454', '1.12399', '58396'],
	['2015/09/29', '00:00:00', '1.12401', '1.12804', '1.11931', '1.12506', '61619'],
	['2015/09/30', '00:00:00', '1.12501', '1.12603', '1.11571', '1.11729', '55842'],
	['2015/10/01', '00:00:00', '1.11725', '1.12087', '1.11341', '1.11853', '51945'],
	['2015/10/02', '00:00:00', '1.11848', '1.13174', '1.11501', '1.12028', '59207'],
	['2015/10/05', '00:00:00', '1.12177', '1.12880', '1.11726', '1.11838', '55632'],
	['2015/10/06', '00:00:00', '1.11837', '1.12783', '1.11707', '1.12674', '50757'],
	['2015/10/07', '00:00:00', '1.12673', '1.12841', '1.12101', '1.12380', '54744'],
];

// Areas left untinted, each one framed in navy
const spotlights = [
	[[17, 22], [254, 22], [254, 84], [433, 84], [433, 180], [573, 180], [573, 300], [433, 300], [433, 387], [254, 387], [254, 454], [17, 454]],
	[[741, 132], [1107, 132], [1107, 302], [741, 302]],
	[[462, 332], [1095, 332], [1095, 624], [462, 624]],
	[[22, 753], [259, 753], [259, 911], [719, 911], [719, 1240], [247, 1240], [247, 1189], [22, 1189]],
];

const px = ([x, y]) => `${x}px ${y}px`;
const tintShape = `polygon(evenodd, 0 0, 100% 0, 100% 100%, 0 100%, 0 0, ${spotlights
	.map((points) => [...points, points[0]].map(px).join(', ') + ', 0 0')
	.join(', ')})`;

function Menu({ items, width, nested, selected }) {
	return (
		<Popup $width={width} $nested={nested}>
			{items.map((item, i) => item === null ? <PopupLine key={i} role="separator" /> : (
				<PopupRow key={item.label} $active={item.active || selected === item.label}>
					<button type="button">
						<PopupIcon>{item.icon && <Icon name={item.icon} />}</PopupIcon>
						{item.label}
						{item.keys && <Shortcut>{item.keys}</Shortcut>}
						{(item.arrow || item.items) && <Arrow />}
					</button>
					{item.items && (nested || selected === item.label) && (
						<Menu items={item.items} width={item.width} nested />
					)}
				</PopupRow>
			))}
		</Popup>
	);
}

const Tool = ({ name, pressed }) => (
	<ToolButton type="button" aria-label={name} $pressed={pressed}><Icon name={name} /></ToolButton>
);

const DropTool = ({ name }) => (
	<ToolButton type="button" aria-label={name} $wide={35}><Icon name={name} /><Caret /></ToolButton>
);

function Toolbars() {
	return (
		<>
			<ToolRow $height={27} $indent={411}>
				<ToolGroup $underline $after={15}>
					<Grip />
					<DropTool name="newChart" />
					<DropTool name="windows" />
					<Divider />
					{['market', 'target', 'favourites', 'terminal', 'tester'].map((name) => <Tool key={name} name={name} />)}
					<Divider />
					<ToolButton type="button" $wide={83}><Icon name="order" />New Order</ToolButton>
					{['book', 'host', 'signal'].map((name) => <Tool key={name} name={name} />)}
					<ToolButton type="button" $wide={92}><Icon name="robot" />AutoTrading</ToolButton>
				</ToolGroup>
				<ToolGroup $underline $end={2}>
					<Grip $after={2} />
					<Tool name="cursor" pressed />
					<Tool name="cross" />
					<Divider />
					{['vline', 'hline', 'trend', 'equidistant', 'fibo', 'fiboTime', 'wave', 'deviation', 'gann'].map((name) => (
						<Tool key={name} name={name} />
					))}
				</ToolGroup>
				<Corner>
					<Icon name="search" />
					<svg width="22" height="20" viewBox="0 0 22 20" role="img" aria-label="1 notification">
						<path d="M3 10q6-5 11 1 0 6-5 6l-4 2 .5-2.500Q1 15 3 10z" fill="#e2e6ea" stroke="#aab" />
						<circle cx="14" cy="8" r="7.500" fill="#c9302c" />
						<text x="14" y="12" fontSize="11" fill="#fff" textAnchor="middle">1</text>
					</svg>
				</Corner>
			</ToolRow>
			<ToolRow $height={26} $indent={549}>
				<ToolGroup $after={41} $end={2}>
					<Grip $after={2} />
					{['M1', 'M5', 'M15', 'M30', 'H1', 'H4', 'D1', 'W1', 'MN'].map((name) => (
						<Period key={name} type="button" $pressed={name === 'D1'}>{name}</Period>
					))}
				</ToolGroup>
				<ToolGroup>
					<Grip $after={9} />
					<Tool name="zoomOut" />
					<Tool name="zoomIn" />
					<Divider />
					<Tool name="fit" />
					<DropTool name="template" />
					<Divider />
					<Tool name="bars" />
					<Tool name="candles" pressed />
					<Tool name="line" />
					<Tool name="tile" />
					<Tool name="scroll" pressed />
					<Tool name="shift" pressed />
					<DropTool name="indicator" />
					<DropTool name="clock" />
				</ToolGroup>
			</ToolRow>
		</>
	);
}

function Chart({ current }) {
	return (
		<ChartFrame>
			<ChartRow>
				<Plot>
					<svg role="img" aria-label="EURUSD daily candles">
						<g transform="translate(-5 -102)">
							{months.map((x) => (
								<path key={x} d={`M${x + 0.5} 102v560`} stroke="#111" strokeDasharray="3 3" />
							))}
							<path d="M5 264.500h3000" stroke="#708090" />
							{candles.map(({ x, dir, high, top, bottom, low }) => (
								<g key={x} fill={dir === 'u' ? '#008000' : '#f00'}>
									<rect x={x - 0.5} y={high} width="1.200" height={low - high} />
									<rect x={x - 1.4} y={top} width="3" height={Math.max(1, bottom - top)} />
								</g>
							))}
							<path d="M6.500 108h8l-4 4z" fill="#333" />
							<path d="M982 102h10l-5 5z" fill="#708090" />
						</g>
					</svg>
				</Plot>
				<PriceAxis>
					{prices.map((price) => (
						<li key={price || current}><Price $current={!price}>{price || current}</Price></li>
					))}
				</PriceAxis>
			</ChartRow>
			<TimeAxis>
				{dates.map((date) => <li key={date}>{date}</li>)}
			</TimeAxis>
		</ChartFrame>
	);
}

function Terminal({ selected, current, tall }) {
	return (
		<main>
			<TitleBar $tall={tall}>
				<Icon name="app" />
				<h1>1277599: IFCMarkets-Demo - Demo Account - IFCMarkets. Corp. - [EURUSD,Daily]</h1>
				<WindowButtons>
					<button type="button" aria-label="Minimize"><Icon name="minimize" /></button>
					<button type="button" aria-label="Restore"><Icon name="restore" /></button>
					<button type="button" aria-label="Close"><Icon name="close" /></button>
				</WindowButtons>
			</TitleBar>
			<MenuBar>
				<Icon name="windows" size={12} />
				<MenuSlot>
					<MenuTitle type="button" $open>File</MenuTitle>
					<Menu items={fileMenu} width={231} selected={selected} />
				</MenuSlot>
				{['View', 'Insert', 'Charts', 'Tools', 'Window', 'Help'].map((name) => (
					<MenuTitle key={name} type="button">{name}</MenuTitle>
				))}
				<ChildButtons>
					<button type="button" aria-label="Minimize chart"><Icon name="childMin" /></button>
					<button type="button" aria-label="Restore chart"><Icon name="childRestore" /></button>
					<button type="button" aria-label="Close chart"><Icon name="childClose" /></button>
				</ChildButtons>
			</MenuBar>
			<Toolbars />
			<Chart current={current} />
			<Tabs>
				{tabs.map((name) => (
					<Tab key={name} type="button" $active={name === 'EURUSD,Daily'} $plain={name === 'Nd100,H1'}>
						<span>{name}</span>
					</Tab>
				))}
				<TabScroll>
					<Icon name="left" size={10} />
					<Icon name="right" size={10} />
				</TabScroll>
			</Tabs>
		</main>
	);
}

function Status() {
	return (
		<StatusBar>
			<StatusCell />
			<StatusCell $width={109}>American Indices</StatusCell>
			<StatusCell $width={96} />
			<StatusCell $width={66} />
			<StatusCell $width={66} />
			<StatusCell $width={65} />
			<StatusCell $width={66} />
			<StatusCell $width={61} />
			<StatusCell $width={122}>
				<svg width="22" height="13" aria-hidden="true">
					{[0, 1, 2, 3, 4, 5, 6, 7, 8, 9].map((i) => (
						<g key={i}>
							<rect x={i * 2.2} y="0" width="1.500" height={9 - i * 0.8} fill="#5c8a3c" />
							<rect x={i * 2.2} y={10 - i * 0.8} width="1.500" height={3 + i * 0.8} fill="#174f8c" />
						</g>
					))}
				</svg>
				46652/74 kb
			</StatusCell>
		</StatusBar>
	);
}

function DialogHead({ title, height }) {
	return (
		<DialogTitle $height={height}>
			<h2>{title}</h2>
			<button type="button">?</button>
			<button type="button" aria-label="Close"><Icon name="close" /></button>
		</DialogTitle>
	);
}

function SaveProfile() {
	return (
		<Dialog $x={749} $y={133} $width={354}>
			<DialogHead title="Save Profile" height={30} />
			<ProfileBody>
				<ProfileFields>
					<PaneIcon stacked />
					<label htmlFor="profile">Enter new profile name</label>
					<Combo>
						<input id="profile" type="text" />
						<svg width="9" height="6" aria-hidden="true"><path d="M.5.500l4 4 4-4" fill="none" stroke="#444" /></svg>
					</Combo>
				</ProfileFields>
				<Rule />
				<Buttons $indent={91}>
					<PushButton type="button" $primary>OK</PushButton>
					<PushButton type="button">Cancel</PushButton>
				</Buttons>
			</ProfileBody>
		</Dialog>
	);
}

function SavePicture() {
	return (
		<Dialog $x={259} $y={913} $width={457}>
			<DialogHead title="Save As Picture" height={26} />
			<PictureBody>
				<Notice>
					<PaneIcon />
					<p>
						You may freely print out, reproduce, and distribute all screenshots of this<br />
						product as long as the copyright notice can be seen at the bottom of the<br />
						window.
					</p>
				</Notice>
				<Options>
					<legend>Select the image you would like to save:</legend>
					<OptionRow>
						<Mark type="radio" name="area" id="workspace" />
						<label htmlFor="workspace">Active workspace</label>
					</OptionRow>
					<OptionRow>
						<Mark type="radio" name="area" id="asis" />
						<label htmlFor="asis">Active chart (as is)</label>
					</OptionRow>
					<OptionRow $fixed>
						<Mark type="radio" name="area" id="chart" defaultChecked />
						<label htmlFor="chart">Active chart</label>
						<SizeInput type="text" aria-label="Width" defaultValue="800" />
						<Unit>x</Unit>
						<SizeInput type="text" aria-label="Height" defaultValue="600" />
						<Unit>pixels</Unit>
					</OptionRow>
					<OptionRow>
						<Mark type="checkbox" id="post" />
						<label htmlFor="post">Post image online in MQL5 Charts service and get the link</label>
					</OptionRow>
				</Options>
				<LinkBox />
				<Buttons $indent={137}>
					<PushButton type="button" $primary>OK</PushButton>
					<PushButton type="button">Cancel</PushButton>
				</Buttons>
			</PictureBody>
		</Dialog>
	);
}

function QuoteSheet() {
	return (
		<Sheet $x={489} $y={334} $width={601}>
			<Quotes>
				<caption>EURUSD,Daily</caption>
				<colgroup>
					{columns.map(([name, width]) => <col key={name} width={width} />)}
				</colgroup>
				<thead>
					<tr>{columns.map(([name]) => <th key={name} scope="col">{name}</th>)}</tr>
				</thead>
				<tbody>
					{quotes.map((row) => (
						<tr key={row[0]}>{row.map((cell, i) => <td key={i}>{cell}</td>)}</tr>
					))}
				</tbody>
			</Quotes>
		</Sheet>
	);
}

export default function App() {
	return (
		<Page>
			<GlobalStyle />
			<Terminal selected="Profiles" current="1.08224" />
			<Status />
			<Terminal selected="Save As Picture..." current="1.08208" tall />
			<QuoteSheet />
			<SaveProfile />
			<SavePicture />
			<Tint style={{ clipPath: tintShape }} />
			<Outlines aria-hidden="true">
				{spotlights.map((points) => <polygon key={points[0]} points={points.join(' ')} />)}
			</Outlines>
		</Page>
	);
}
